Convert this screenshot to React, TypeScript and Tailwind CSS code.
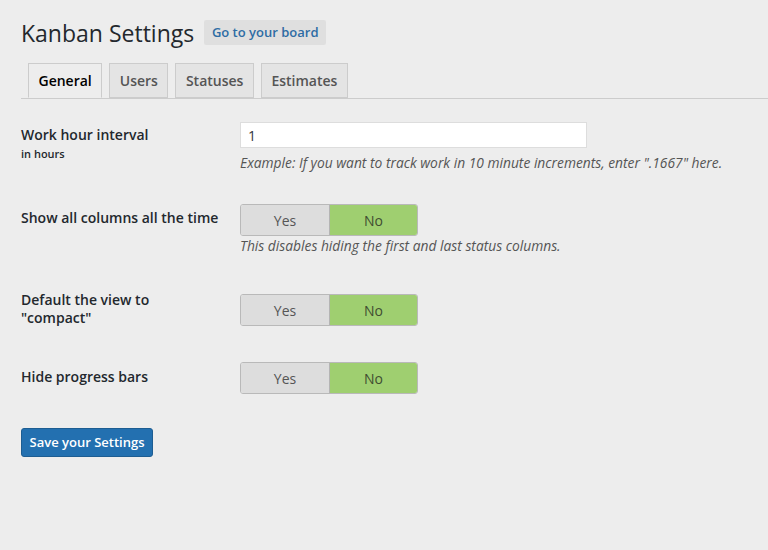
import React from "react";

function Toggle() {
  return (
    <div className="flex h-[32px] w-[178px] rounded-[3px] overflow-hidden border border-[#b9b9b9] text-[14px]">
      <div className="flex w-[89px] items-center justify-center bg-[#dddddd] text-[#555555] border-r border-[#b4b4b4]">Yes</div>
      <div className="flex flex-1 items-center justify-center bg-[#9fcf70] text-[#3f4d32]">No</div>
    </div>
  );
}

export default function App() {
  return (
    <div
      className="min-h-[550px] w-full bg-[#ededed] text-[#23282d]"
      style={{ fontFamily: '"Open Sans", "Noto Sans", sans-serif' }}
    >
      <div className="flex items-center pl-[21px] pt-[20px] gap-[10px]">
        <h1 className="text-[23px] leading-[22px] font-normal text-[#23282d]">Kanban Settings</h1>
        <div className="flex h-[25px] w-[122px] items-center justify-center rounded-[2px] bg-[#dfdfdf] text-[13px] font-semibold text-[#2e6ca4]">
          Go to your board
        </div>
      </div>

      <div className="ml-[21px] mt-[18px] flex gap-[7px] border-b border-[#cccccc] pl-[7px]">
        <div className="-mb-px flex h-[35px] items-center border border-[#cccccc] border-b-[#ededed] bg-[#ededed] px-[9.5px] text-[14px] font-semibold text-[#000000]">
          General
        </div>
        <div className="flex h-[35px] items-center border border-[#cccccc] bg-[#e4e4e4] px-[9.5px] text-[14px] font-semibold text-[#555555]">
          Users
        </div>
        <div className="flex h-[35px] items-center border border-[#cccccc] bg-[#e4e4e4] px-[9.5px] text-[14px] font-semibold text-[#555555]">
          Statuses
        </div>
        <div className="flex h-[35px] items-center border border-[#cccccc] bg-[#e4e4e4] px-[9.5px] text-[14px] font-semibold text-[#555555]">
          Estimates
        </div>
      </div>

      <div className="pl-[21px]">
        {/* Row 1 */}
        <div className="mt-[23px] flex">
          <div className="w-[219px] pt-[4px]">
            <div className="text-[14px] font-semibold leading-[18px]">Work hour interval</div>
            <div className="mt-[3px] text-[11px] font-semibold leading-[14px]">in hours</div>
          </div>
          <div>
            <div className="flex h-[26px] w-[347px] items-center border border-[#dddddd] bg-white pl-[7px] text-[14px] text-[#32373c]">
              1
            </div>
            <div className="mt-[6px] text-[13.8px] italic leading-[18px] text-[#555555]">
              Example: If you want to track work in 10 minute increments, enter ".1667" here.
            </div>
          </div>
        </div>

        {/* Row 2 */}
        <div className="mt-[32px] flex">
          <div className="w-[219px] pt-[5px] text-[14px] font-semibold leading-[18px]">Show all columns all the time</div>
          <div>
            <Toggle />
            <div className="mt-[1px] text-[13.8px] italic leading-[18px] text-[#555555]">
              This disables hiding the first and last status columns.
            </div>
          </div>
        </div>

        {/* Row 3 */}
        <div className="mt-[39px] flex">
          <div className="w-[200px] mr-[19px] -mt-[3px] text-[14px] font-semibold leading-[18px]">
            Default the view to "compact"
          </div>
          <div>
            <Toggle />
          </div>
        </div>

        {/* Row 4 */}
        <div className="mt-[35px] flex">
          <div className="w-[219px] pt-[6px] text-[14px] font-semibold leading-[18px]">Hide progress bars</div>
          <div>
            <Toggle />
          </div>
        </div>

        <div className="mt-[34px] flex h-[29px] w-[132px] items-center justify-center rounded-[3px] border border-[#1d5d92] bg-[#2370b0] text-[13px] font-semibold text-white">
          Save your Settings
        </div>
      </div>
    </div>
  );
}
